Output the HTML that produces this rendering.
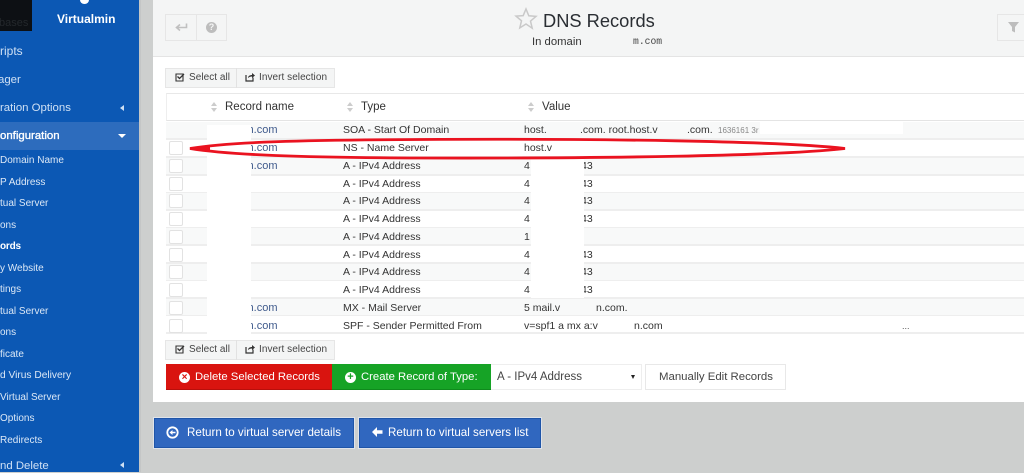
<!DOCTYPE html>
<html><head><meta charset="utf-8"><style>
html,body{margin:0;padding:0}
body{width:1024px;height:472px;position:relative;overflow:hidden;background:#cdcfce;font-family:"Liberation Sans",sans-serif;color:#333}
div,span,svg{position:absolute}
.t{white-space:nowrap;line-height:14px}
.s{color:#dce8f6;font-size:10px;left:0;margin-top:1px}
.m{font-size:11.400px;color:#cfe0f4;margin-top:1px}
.r{left:166px;width:858px;height:16px;border-bottom:2px solid #eeeeee}
.c{font-size:10.500px;color:#333;margin-top:1px}
.d{font-size:11px;color:#3f5a8c;left:244.500px;margin-top:1px}
.cb{left:169px;width:12px;height:12px;border:1px solid #e2e2e2;border-radius:2px;background:#fff}
.w{background:#fff}
.b{background:#f4f5f5;border:1px solid #e6e6e6;box-sizing:border-box}
.bt{font-size:10px;color:#444;letter-spacing:.05px;margin-top:1px}
.h{font-size:11.500px;color:#333;margin-top:1px}
</style></head><body>
<!-- sidebar -->
<div style="left:0;top:0;width:139px;height:472px;background:#0c58b4"></div>
<div style="left:139px;top:0;width:2px;height:472px;background:#c4c6c6"></div>
<div style="left:0;top:122px;width:139px;height:28px;background:#2d6cbd"></div>
<div style="left:0;top:0;width:32px;height:31px;background:#0d1014"></div>
<div class="t" style="left:-1px;top:16px;font-size:11px;color:#24282c">bases</div>
<div style="left:80px;top:-4px;width:9px;height:8px;border-radius:50%;background:#fff"></div>
<div class="t" style="left:57px;top:12px;font-size:12px;font-weight:bold;color:#fff">Virtualmin</div>
<div class="t m" style="left:0;top:43px;font-size:12px">ripts</div>
<div class="t m" style="left:-2px;top:72px">ager</div>
<div class="t m" style="left:0;top:100px">ration Options</div>
<div class="t" style="left:0;top:129px;font-size:11.400px;color:#fff;-webkit-text-stroke:.35px #fff">onfiguration</div>
<div style="left:120px;top:105px;border:3.500px solid transparent;border-right:4px solid #cfe0f4;border-left:0"></div>
<div style="left:118px;top:134px;border:4px solid transparent;border-top:4px solid #fff;border-bottom:0"></div>
<div style="left:120px;top:462px;border:3.500px solid transparent;border-right:4px solid #cfe0f4;border-left:0"></div>
<div class="t s" style="top:153px">Domain Name</div>
<div class="t s" style="top:175px">P Address</div>
<div class="t s" style="top:196px">tual Server</div>
<div class="t s" style="top:218px">ons</div>
<div class="t s" style="top:239px;font-weight:bold;color:#fff;letter-spacing:-.2px">ords</div>
<div class="t s" style="top:261px">y Website</div>
<div class="t s" style="top:282px">tings</div>
<div class="t s" style="top:304px">tual Server</div>
<div class="t s" style="top:325px">ons</div>
<div class="t s" style="top:347px">ficate</div>
<div class="t s" style="top:368px;font-size:10.200px">d Virus Delivery</div>
<div class="t s" style="top:390px">Virtual Server</div>
<div class="t s" style="top:411px">Options</div>
<div class="t s" style="top:433px">Redirects</div>
<div class="t m" style="left:0;top:458px">nd Delete</div>
<!-- panel -->
<div class="w" style="left:153px;top:0;width:871px;height:402px"></div>
<div style="left:153px;top:0;width:871px;height:56px;background:#f4f5f5;border-bottom:1px solid #e4e4e4"></div>
<div class="b" style="left:165px;top:14px;width:32px;height:27px"></div>
<div class="b" style="left:196px;top:14px;width:31px;height:27px"></div>
<div class="b" style="left:997px;top:14px;width:40px;height:27px"></div>
<svg style="left:175px;top:22px" width="13" height="11" viewBox="0 0 13 11"><path d="M11.500 1.500v4H2M5 2.500L1.500 5.500 5 8.500" fill="none" stroke="#c0c0c0" stroke-width="1.600"/></svg>
<div style="left:206px;top:22px;width:11px;height:11px;border-radius:50%;background:#bdbdbd;color:#f4f5f5;font-size:9px;line-height:11px;text-align:center;font-weight:bold">?</div>
<svg style="left:1007px;top:21px" width="13" height="12" viewBox="0 0 13 12"><path d="M1 1h11L8 6v5.500L5 10V6z" fill="#bdbdbd"/></svg>
<svg style="left:514px;top:7px" width="24" height="23" viewBox="0 0 24 23"><path d="M12 2l2.800 6.800 7.200.6-5.500 4.700 1.700 7.100L12 17l-6.200 3.900 1.700-7.100L2 9.100l7.200-.5z" fill="none" stroke="#c9c9c9" stroke-width="1.500"/></svg>
<div class="t" style="left:543px;top:10px;font-size:18.300px;line-height:22px;color:#2a2e33">DNS Records</div>
<div class="t" style="left:532px;top:35px;font-size:11.300px;color:#333">In domain</div>
<div class="t" style="left:633px;top:35px;font-size:9.700px;font-family:'Liberation Mono',monospace;color:#444">m.com</div>
<!-- toolbar -->
<div class="b" style="left:165px;top:68px;width:170px;height:20px"></div>
<div style="left:236px;top:68px;width:1px;height:20px;background:#e2e2e2"></div>
<svg style="left:175px;top:72px" width="10" height="10" viewBox="0 0 10 10"><path d="M1 2h7v7H1z" fill="none" stroke="#333" stroke-width="1.100"/><path d="M2.500 4.500l2 2L9 2" fill="none" stroke="#333" stroke-width="1.300"/></svg>
<svg style="left:245px;top:72px" width="10" height="10" viewBox="0 0 10 10"><path d="M1 3v6h7V5.500" fill="none" stroke="#333" stroke-width="1.200"/><path d="M3 6c0-2 2-3 4-3V1l3 2.500L7 6V4.500C5.500 4.500 4 5 3 6z" fill="#333"/></svg>
<div class="t bt" style="left:189px;top:70px">Select all</div>
<div class="t bt" style="left:259px;top:70px">Invert selection</div>
<!-- table header -->
<div style="left:166px;top:93px;width:858px;height:28px;border-top:1px solid #e8e8e8;border-bottom:1px solid #e4e4e4;border-left:1px solid #eee;box-sizing:border-box"></div>
<div style="left:211px;top:102px;border:3px solid transparent;border-bottom:4px solid #ccc;border-top:0"></div>
<div style="left:211px;top:108px;border:3px solid transparent;border-top:4px solid #ccc;border-bottom:0"></div>
<div style="left:347px;top:102px;border:3px solid transparent;border-bottom:4px solid #ccc;border-top:0"></div>
<div style="left:347px;top:108px;border:3px solid transparent;border-top:4px solid #ccc;border-bottom:0"></div>
<div style="left:528px;top:102px;border:3px solid transparent;border-bottom:4px solid #ccc;border-top:0"></div>
<div style="left:528px;top:108px;border:3px solid transparent;border-top:4px solid #ccc;border-bottom:0"></div>
<div class="t h" style="left:225px;top:99px">Record name</div>
<div class="t h" style="left:361px;top:99px">Type</div>
<div class="t h" style="left:542px;top:99px">Value</div>
<!-- rows -->
<div class="r" style="top:122px;background:#f8f9f9"></div>
<div class="r" style="top:140px;background:#fff"></div>
<div class="r" style="top:158px;background:#f8f9f9"></div>
<div class="r" style="top:176px;background:#fff"></div>
<div class="r" style="top:193px;background:#f8f9f9"></div>
<div class="r" style="top:211px;background:#fff"></div>
<div class="r" style="top:228px;background:#f8f9f9"></div>
<div class="r" style="top:246px;background:#fff"></div>
<div class="r" style="top:264px;background:#f8f9f9"></div>
<div class="r" style="top:281px;background:#fff"></div>
<div class="r" style="top:299px;background:#f8f9f9"></div>
<div class="r" style="top:316px;background:#fff"></div>
<div class="cb" style="top:141px"></div>
<div class="cb" style="top:159px"></div>
<div class="cb" style="top:177px"></div>
<div class="cb" style="top:194px"></div>
<div class="cb" style="top:212px"></div>
<div class="cb" style="top:230px"></div>
<div class="cb" style="top:248px"></div>
<div class="cb" style="top:265px"></div>
<div class="cb" style="top:283px"></div>
<div class="cb" style="top:301px"></div>
<div class="cb" style="top:319px"></div>
<div class="t d" style="top:122px">m.com</div>
<div class="t d" style="top:140px">m.com</div>
<div class="t d" style="top:158px">m.com</div>
<div class="t d" style="top:300px">m.com</div>
<div class="t d" style="top:318px">m.com</div>
<!-- redaction columns -->
<div class="w" style="left:207px;top:125px;width:44px;height:211px"></div>
<div class="t c" style="left:343px;top:122px">SOA - Start Of Domain</div>
<div class="t c" style="left:343px;top:140px">NS - Name Server</div>
<div class="t c" style="left:343px;top:158px">A - IPv4 Address</div>
<div class="t c" style="left:343px;top:176px">A - IPv4 Address</div>
<div class="t c" style="left:343px;top:193px">A - IPv4 Address</div>
<div class="t c" style="left:343px;top:211px">A - IPv4 Address</div>
<div class="t c" style="left:343px;top:229px">A - IPv4 Address</div>
<div class="t c" style="left:343px;top:247px">A - IPv4 Address</div>
<div class="t c" style="left:343px;top:264px">A - IPv4 Address</div>
<div class="t c" style="left:343px;top:282px">A - IPv4 Address</div>
<div class="t c" style="left:343px;top:300px">MX - Mail Server</div>
<div class="t c" style="left:343px;top:318px">SPF - Sender Permitted From</div>
<div class="t c" style="left:524px;top:122px">host.</div>
<div class="t c" style="left:580px;top:122px">.com. root.host.v</div>
<div class="t c" style="left:687px;top:122px">.com.</div>
<div class="t c" style="left:718px;top:123px;color:#888;font-size:8px">1636161 3r</div>
<div class="w" style="left:760px;top:121px;width:143px;height:13px"></div>
<div class="t c" style="left:524px;top:140px">host.v</div>
<div class="t c" style="left:524px;top:158px">4</div>
<div class="t c" style="left:524px;top:176px">4</div>
<div class="t c" style="left:524px;top:193px">4</div>
<div class="t c" style="left:524px;top:211px">4</div>
<div class="t c" style="left:524px;top:229px">1</div>
<div class="t c" style="left:524px;top:247px">4</div>
<div class="t c" style="left:524px;top:264px">4</div>
<div class="t c" style="left:524px;top:282px">4</div>
<div class="t c" style="left:581px;top:158px">43</div>
<div class="t c" style="left:581px;top:176px">43</div>
<div class="t c" style="left:581px;top:193px">43</div>
<div class="t c" style="left:581px;top:211px">43</div>
<div class="t c" style="left:581px;top:247px">43</div>
<div class="t c" style="left:581px;top:264px">43</div>
<div class="t c" style="left:581px;top:282px">43</div>
<div class="w" style="left:531px;top:158px;width:53px;height:140px"></div>
<div class="t c" style="left:524px;top:300px">5 mail.v</div>
<div class="t c" style="left:596px;top:300px">n.com.</div>
<div class="t c" style="left:524px;top:318px">v=spf1 a mx a:v</div>
<div class="t c" style="left:634px;top:318px">n.com</div>
<div class="t" style="left:902px;top:319px;font-size:9px;color:#555">...</div>
<!-- red ellipse -->
<svg style="left:0;top:0" width="1024" height="472" viewBox="0 0 1024 472"><path d="M190 148.500C230 142 300 140 420 139.500 600 138.500 780 141 845 148.500 780 156 600 158.500 420 158 300 157.500 230 155 190 148.500z" fill="none" stroke="#ea1320" stroke-width="2.800"/><path d="M190 148.500l20-2.500v5z" fill="#ea1320"/><path d="M845 148.500l-12-2.500v5z" fill="#ea1320"/></svg>
<!-- lower toolbar -->
<div class="b" style="left:165px;top:340px;width:170px;height:20px"></div>
<div style="left:236px;top:340px;width:1px;height:20px;background:#e2e2e2"></div>
<svg style="left:175px;top:344px" width="10" height="10" viewBox="0 0 10 10"><path d="M1 2h7v7H1z" fill="none" stroke="#333" stroke-width="1.100"/><path d="M2.500 4.500l2 2L9 2" fill="none" stroke="#333" stroke-width="1.300"/></svg>
<svg style="left:245px;top:344px" width="10" height="10" viewBox="0 0 10 10"><path d="M1 3v6h7V5.500" fill="none" stroke="#333" stroke-width="1.200"/><path d="M3 6c0-2 2-3 4-3V1l3 2.500L7 6V4.500C5.500 4.500 4 5 3 6z" fill="#333"/></svg>
<div class="t bt" style="left:189px;top:342px">Select all</div>
<div class="t bt" style="left:259px;top:342px">Invert selection</div>
<!-- action row -->
<div style="left:166px;top:364px;width:167px;height:26px;background:#d9140f;border-bottom:1px solid #b80f0b;box-sizing:border-box"></div>
<div style="left:332px;top:364px;width:159px;height:26px;background:#16a326;border-bottom:1px solid #0f8a1d;box-sizing:border-box"></div>
<div style="left:179px;top:372px;width:11px;height:11px;border-radius:50%;background:#fff;color:#d9140f;font-size:10px;font-weight:bold;line-height:11px;text-align:center">×</div>
<div style="left:345px;top:372px;width:11px;height:11px;border-radius:50%;background:#fff;color:#16a326;font-size:11px;font-weight:bold;line-height:11px;text-align:center">+</div>
<div class="t" style="left:195px;top:370px;font-size:11.300px;color:#fff">Delete Selected Records</div>
<div class="t" style="left:361px;top:370px;font-size:11.300px;color:#fff">Create Record of Type:</div>
<div style="left:491px;top:364px;width:151px;height:26px;background:#fff;border:1px solid #eee;border-left:0;box-sizing:border-box"></div>
<div class="t" style="left:497px;top:370px;font-size:11.500px;color:#444">A - IPv4 Address</div>
<div style="left:631px;top:375px;border:2.500px solid transparent;border-top:4px solid #222;border-bottom:0"></div>
<div style="left:645px;top:364px;width:141px;height:26px;background:#fff;border:1px solid #e8e8e8;box-sizing:border-box"></div>
<div class="t" style="left:659px;top:370px;font-size:11.400px;color:#444">Manually Edit Records</div>
<!-- return buttons -->
<div style="left:154px;top:418px;width:200px;height:30px;background:#3067bf;border:1px solid #1f55a8;box-shadow:0 0 0 1px #dfe3ea;box-sizing:border-box"></div>
<div style="left:359px;top:418px;width:182px;height:30px;background:#3067bf;border:1px solid #1f55a8;box-shadow:0 0 0 1px #dfe3ea;box-sizing:border-box"></div>
<svg style="left:166px;top:426px" width="13" height="13" viewBox="0 0 13 13"><circle cx="6.500" cy="6.500" r="5.200" fill="none" stroke="#fff" stroke-width="1.800"/><path d="M3.500 6.500L6.500 4v1.700h3v1.600h-3V9z" fill="#fff"/></svg>
<svg style="left:371px;top:426px" width="12" height="12" viewBox="0 0 12 12"><path d="M1 6l5-5v3.200h5.500v3.600H6V11z" fill="#fff"/></svg>
<div class="t" style="left:187px;top:426px;font-size:11.600px;color:#fff">Return to virtual server details</div>
<div class="t" style="left:388px;top:426px;font-size:11.600px;color:#fff">Return to virtual servers list</div>
</body></html>
